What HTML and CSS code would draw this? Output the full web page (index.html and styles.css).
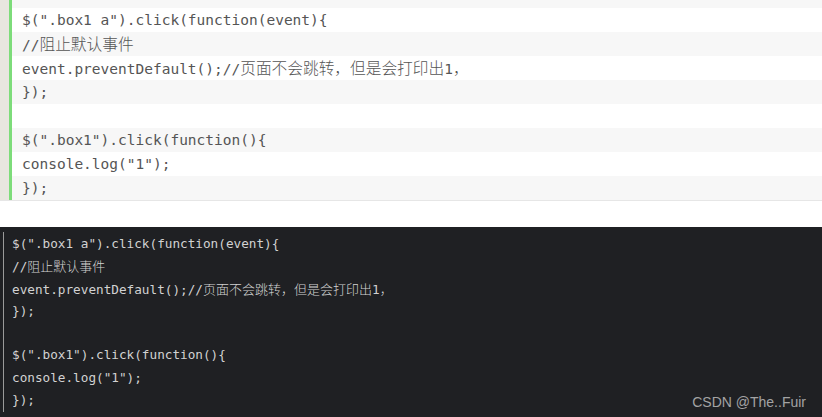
FILE: index.html
```html
<!DOCTYPE html>
<html>
<head>
<meta charset="utf-8">
<link rel="stylesheet" href="styles.css">
</head>
<body>
<div class="light">
  <div class="gutter"></div>
  <div class="bar"></div>
  <div class="lines">
    <div class="row cut"></div>
    <div class="row">$(".box1 a").click(function(event){</div>
    <div class="row">//<span class="cj">阻止默认事件</span></div>
    <div class="row">event.preventDefault();//<span class="cj">页面不会跳转，但是会打印出</span>1<span class="cj">，</span></div>
    <div class="row">});</div>
    <div class="row"></div>
    <div class="row">$(".box1").click(function(){</div>
    <div class="row">console.log("1");</div>
    <div class="row">});</div>
  </div>
</div>
<div class="dark">
  <div class="dline"></div>
  <div class="dcode">
    <div class="drow">$(".box1 a").click(function(event){</div>
    <div class="drow">//<span class="dcj">阻止默认事件</span></div>
    <div class="drow">event.preventDefault();//<span class="dcj">页面不会跳转，但是会打印出</span>1<span class="dcj">，</span></div>
    <div class="drow">});</div>
    <div class="drow"></div>
    <div class="drow">$(".box1").click(function(){</div>
    <div class="drow">console.log("1");</div>
    <div class="drow">});</div>
  </div>
  <div class="mark">CSDN @The..Fuir</div>
</div>
</body>
</html>
```
FILE: styles.css
```css
html, body {
  margin: 0;
  padding: 0;
  background: #ffffff;
  width: 822px;
  height: 417px;
  overflow: hidden;
}

.light {
  display: flex;
  border-bottom: 1px solid #e6e6e6;
}

.gutter {
  width: 9px;
  background: #e8e6e0;
}

.bar {
  width: 3px;
  background: #7ddc7a;
}

.lines {
  flex: 1;
  font-family: "DejaVu Sans Mono", "Noto Sans CJK SC", monospace;
  font-size: 14.5px;
  color: #555555;
}

.row {
  height: 24px;
  line-height: 24px;
  padding-left: 10px;
  white-space: pre;
}

.row:nth-child(odd) {
  background: #f7f7f7;
}

.row.cut {
  height: 8px;
}

.cj {
  font-family: "Noto Sans CJK SC", sans-serif;
  font-size: 15.7px;
  font-weight: 300;
}

.dark {
  position: relative;
  margin-top: 26px;
  height: 190px;
  background: #1f2023;
  display: flex;
}

.dline {
  width: 1px;
  margin: 5px 0 5px 3px;
  background: #9a9a9a;
}

.dcode {
  padding: 6px 0 0 8px;
  font-family: "DejaVu Sans Mono", "Noto Sans CJK SC", monospace;
  font-size: 12.7px;
  color: #d2d2d2;
}

.drow {
  height: 22.3px;
  line-height: 22.3px;
  white-space: pre;
}

.dcj {
  font-family: "Noto Sans CJK SC", sans-serif;
  font-size: 13px;
  font-weight: 300;
}

.mark {
  position: absolute;
  right: 16px;
  bottom: 7px;
  font-family: "Liberation Sans", Arial, sans-serif;
  font-size: 14px;
  color: #a3a3a3;
}
```
